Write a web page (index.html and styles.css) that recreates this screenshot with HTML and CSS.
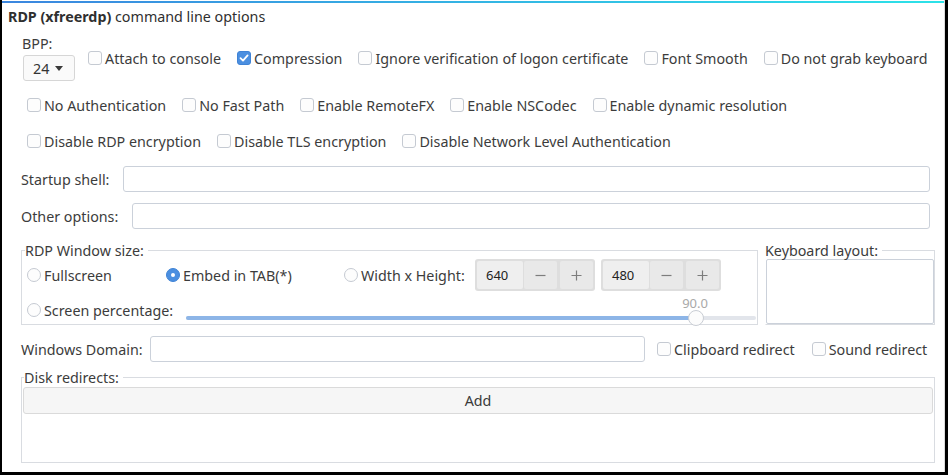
FILE: index.html
```html
<!DOCTYPE html>
<html>
<head>
<meta charset="utf-8">
<link rel="stylesheet" href="styles.css">
</head>
<body>
<div class="panel">
  <div class="topline"></div>
  <div class="title"><b>RDP (xfreerdp)</b> command line options</div>
  <div class="content">
    <div class="row row1">
      <div class="bpp">
        <div class="bpp-label">BPP:</div>
        <div class="combo"><span>24</span><span class="caret"></span></div>
      </div>
      <label class="check"><span class="box"></span><span>Attach to console</span></label>
      <label class="check"><span class="box checked"><svg width="10" height="10" viewBox="0 0 10 10"><path d="M1.5 5.2 L4 7.6 L8.6 2.4" fill="none" stroke="#fff" stroke-width="1.8" stroke-linecap="round" stroke-linejoin="round"/></svg></span><span>Compression</span></label>
      <label class="check"><span class="box"></span><span>Ignore verification of logon certificate</span></label>
      <label class="check"><span class="box"></span><span>Font Smooth</span></label>
      <label class="check"><span class="box"></span><span>Do not grab keyboard</span></label>
    </div>
    <div class="row row2">
      <label class="check"><span class="box"></span><span>No Authentication</span></label>
      <label class="check"><span class="box"></span><span>No Fast Path</span></label>
      <label class="check"><span class="box"></span><span>Enable RemoteFX</span></label>
      <label class="check"><span class="box"></span><span>Enable NSCodec</span></label>
      <label class="check"><span class="box"></span><span>Enable dynamic resolution</span></label>
    </div>
    <div class="row row3">
      <label class="check"><span class="box"></span><span>Disable RDP encryption</span></label>
      <label class="check"><span class="box"></span><span>Disable TLS encryption</span></label>
      <label class="check"><span class="box"></span><span>Disable Network Level Authentication</span></label>
    </div>

    <div class="field field-startup">
      <span class="flabel lbl-startup">Startup shell:</span>
      <div class="entry"></div>
    </div>
    <div class="field field-other">
      <span class="flabel lbl-other">Other options:</span>
      <div class="entry"></div>
    </div>

    <div class="size-row">
      <fieldset class="group winsize">
        <legend>RDP Window size:</legend>
        <div class="ws-body">
          <div class="ws-row-a">
            <label class="radio opt-full"><span class="dot"></span><span>Fullscreen</span></label>
            <label class="radio opt-embed"><span class="dot on"></span><span>Embed in TAB(*)</span></label>
            <label class="radio opt-wh"><span class="dot"></span><span>Width x Height:</span></label>
            <div class="spin">
              <div class="spin-val">640</div>
              <div class="spin-btn minus"><svg width="11" height="11" viewBox="0 0 11 11"><path d="M0.5 5.5 H10.5" stroke="#7d7d7d" stroke-width="1.2"/></svg></div>
              <div class="spin-btn plus"><svg width="11" height="11" viewBox="0 0 11 11"><path d="M0.5 5.5 H10.5 M5.5 0.5 V10.5" stroke="#7d7d7d" stroke-width="1.2"/></svg></div>
            </div>
            <div class="spin spin2">
              <div class="spin-val">480</div>
              <div class="spin-btn minus"><svg width="11" height="11" viewBox="0 0 11 11"><path d="M0.5 5.5 H10.5" stroke="#7d7d7d" stroke-width="1.2"/></svg></div>
              <div class="spin-btn plus"><svg width="11" height="11" viewBox="0 0 11 11"><path d="M0.5 5.5 H10.5 M5.5 0.5 V10.5" stroke="#7d7d7d" stroke-width="1.2"/></svg></div>
            </div>
          </div>
          <div class="ws-row-b">
            <label class="radio opt-pct"><span class="dot"></span><span>Screen percentage:</span></label>
            <div class="slider" style="--pos: 89.5%">
              <div class="slider-value">90.0</div>
              <div class="track"><div class="fill"></div><div class="handle"></div></div>
            </div>
          </div>
        </div>
      </fieldset>
      <fieldset class="group kbd">
        <legend>Keyboard layout:</legend>
        <div class="kbd-box"></div>
      </fieldset>
    </div>

    <div class="field field-domain">
      <span class="flabel lbl-domain">Windows Domain:</span>
      <div class="entry entry-domain"></div>
      <label class="check chk-clip"><span class="box"></span><span>Clipboard redirect</span></label>
      <label class="check chk-sound"><span class="box"></span><span>Sound redirect</span></label>
    </div>

    <fieldset class="group disk">
      <legend>Disk redirects:</legend>
      <div class="disk-body">
        <div class="add-btn">Add</div>
      </div>
    </fieldset>
  </div>
</div>
</body>
</html>
```

FILE: styles.css
```css
html, body {
  margin: 0;
  padding: 0;
}
body {
  background: #000;
  width: 948px;
  height: 475px;
  overflow: hidden;
  font-family: "Noto Sans", "DejaVu Sans", sans-serif;
  font-size: 14.3px;
  line-height: 17px;
  color: #3c3c3c;
}
.panel {
  margin-left: 2px;
  width: 942px;
  height: 472px;
  background: #fff;
  border-right: 1px solid #dcdcdc;
  overflow: hidden;
}
.topline {
  margin-top: 1px;
  height: 2px;
  background: linear-gradient(90deg, #3b86df, #2ce2e8);
}
.title {
  margin: 5px 0 0 6px;
  color: #2f2f2f;
  white-space: nowrap;
}
.title b {
  font-weight: 700;
}
.content {
  margin-left: 19px;
  width: 914px;
}
.row {
  display: flex;
  align-items: center;
  gap: 16px;
  white-space: nowrap;
}
.row1 {
  margin-top: 10px;
}
.row2 {
  margin-top: 15.5px;
  padding-left: 6px;
}
.row3 {
  margin-top: 19px;
  padding-left: 6px;
}
.bpp {
  margin-left: 1px;
  margin-right: -3px;
}
.bpp-label {
  margin-bottom: 3px;
}
.combo {
  margin-left: 1px;
  width: 52px;
  height: 26px;
  box-sizing: border-box;
  border: 1px solid #d6d6d6;
  border-radius: 3px;
  background: #fafafa;
  display: flex;
  align-items: center;
  padding-left: 9px;
  color: #333;
}
.caret {
  margin-left: 6px;
  width: 0;
  height: 0;
  border-left: 4px solid transparent;
  border-right: 4px solid transparent;
  border-top: 5px solid #3a3a3a;
}
.check, .radio {
  display: flex;
  align-items: center;
  gap: 3px;
  flex-shrink: 0;
  white-space: nowrap;
}
.box {
  width: 14px;
  height: 14px;
  box-sizing: border-box;
  border: 1px solid #c5cad2;
  border-radius: 3px;
  background: #fdfdfd;
  display: flex;
  align-items: center;
  justify-content: center;
  flex-shrink: 0;
}
.box.checked {
  background: #4b8fe0;
  border-color: #3f83d6;
}
.dot {
  width: 14px;
  height: 14px;
  box-sizing: border-box;
  border: 1px solid #c5cad2;
  border-radius: 50%;
  background: #fdfdfd;
  flex-shrink: 0;
  display: flex;
  align-items: center;
  justify-content: center;
}
.dot.on {
  background: #4b8fe0;
  border-color: #3f83d6;
}
.dot.on::after {
  content: "";
  width: 4px;
  height: 4px;
  border-radius: 50%;
  background: #fff;
}
.field {
  display: flex;
  align-items: center;
  height: 26px;
  white-space: nowrap;
}
.field-startup {
  margin-top: 16.5px;
}
.field-other {
  margin-top: 11px;
}
.flabel {
  flex-shrink: 0;
}
.lbl-startup { width: 102px; }
.lbl-other { width: 111px; }
.lbl-domain { width: 129px; }
.entry {
  flex: 1;
  height: 26px;
  box-sizing: border-box;
  border: 1px solid #cbd1da;
  border-radius: 3px;
  background: #fff;
  margin-right: 5px;
}
.size-row {
  display: flex;
  gap: 7px;
  margin-top: 12.5px;
}
.group {
  margin: 0;
  padding: 0;
  border: 1px solid #d9dce1;
  min-width: 0;
}
.group legend {
  padding: 0 4px 0 0;
  margin-left: 3px;
  line-height: 17px;
  white-space: nowrap;
}
.winsize {
  width: 737px;
  box-sizing: border-box;
  flex-shrink: 0;
}
.ws-body {
  height: 65.5px;
  padding-left: 5px;
}
.ws-row-a {
  display: flex;
  align-items: center;
  padding-top: 0.5px;
}
.opt-full { width: 139px; }
.opt-embed { width: 178px; }
.opt-wh { width: 131px; }
.opt-pct { width: 159px; align-self: flex-start; margin-top: 4.5px; }
.spin {
  display: flex;
  width: 120px;
  height: 32px;
  box-sizing: border-box;
  padding: 2px;
  background: #dedede;
  border-radius: 3px;
  flex-shrink: 0;
}
.spin2 {
  margin-left: 6px;
}
.spin-val {
  width: 46px;
  background: #efefef;
  border-radius: 2px;
  font-size: 13px;
  color: #222;
  padding-left: 9px;
  box-sizing: border-box;
  display: flex;
  align-items: center;
}
.spin-btn {
  width: 33px;
  background: #e9e9e9;
  border-radius: 2px;
  display: flex;
  align-items: center;
  justify-content: center;
}
.spin-btn.minus { margin-left: 1px; }
.spin-btn.plus { margin-left: 3px; }
.ws-row-b {
  display: flex;
  margin-top: 6px;
}
.slider {
  flex: 1;
  margin-right: 1px;
}
.slider-value {
  height: 13px;
  font-size: 13px;
  line-height: 13px;
  color: #a9a9a9;
  padding-left: calc(var(--pos) - 14px);
  box-sizing: border-box;
}
.track {
  position: relative;
  margin-top: 6px;
  height: 4px;
  border-radius: 2px;
  background: #e2e5eb;
}
.fill {
  width: var(--pos);
  height: 4px;
  border-radius: 2px;
  background: #8db5e7;
}
.handle {
  position: absolute;
  left: calc(var(--pos) - 8px);
  top: -6px;
  width: 16px;
  height: 16px;
  box-sizing: border-box;
  border-radius: 50%;
  border: 1px solid #c9cdd4;
  background: #fcfcfc;
}
.kbd {
  flex: 1;
  border-left-color: transparent;
}
.kbd legend {
  margin-left: -1px;
}
.kbd-box {
  margin-top: 0.5px;
  height: 65px;
  box-sizing: border-box;
  border: 1px solid #cbd1da;
  border-radius: 2px;
  background: #fff;
}
.field-domain {
  margin-top: 11px;
}
.entry-domain {
  flex: none;
  width: 495px;
  margin-right: 0;
}
.chk-clip {
  margin-left: 12px;
}
.chk-sound {
  margin-left: 17px;
}
.disk {
  margin-top: 7px;
  width: 914px;
  box-sizing: border-box;
}
.disk legend {
  margin-left: 2px;
}
.disk-body {
  height: 76px;
  padding: 1px 1px 0 1px;
  box-sizing: border-box;
}
.add-btn {
  height: 27px;
  box-sizing: border-box;
  border: 1px solid #dadada;
  border-radius: 3px;
  background: #f6f6f6;
  display: flex;
  align-items: center;
  justify-content: center;
  color: #3a3a3a;
}
```
